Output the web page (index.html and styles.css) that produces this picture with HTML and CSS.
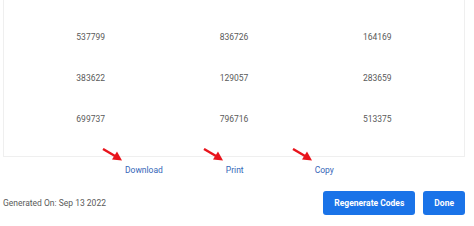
FILE: index.html
```html
<!DOCTYPE html>
<html>
<head>
	<title>Backup Codes</title>
	<link rel="stylesheet" href="styles.css">
</head>
<body>
	<div class="codes">
		<span>537799</span>
		<span>836726</span>
		<span>164169</span>
		<span>383622</span>
		<span>129057</span>
		<span>283659</span>
		<span>699737</span>
		<span>796716</span>
		<span>513375</span>
	</div>

	<div class="actions">
		<a class="link" href="#">
			<svg class="arrow" width="22" height="14" viewBox="0 0 22 14"><line x1="1" y1="1" x2="13" y2="8" stroke="#e8141c" stroke-width="2.4"/><polygon points="20,12.5 10,11.5 15,3.5" fill="#e8141c"/></svg>
			Download
		</a>
		<a class="link print" href="#">
			<svg class="arrow" width="22" height="14" viewBox="0 0 22 14"><line x1="1" y1="1" x2="13" y2="8" stroke="#e8141c" stroke-width="2.4"/><polygon points="20,12.5 10,11.5 15,3.5" fill="#e8141c"/></svg>
			Print
		</a>
		<a class="link copy" href="#">
			<svg class="arrow" width="22" height="14" viewBox="0 0 22 14"><line x1="1" y1="1" x2="13" y2="8" stroke="#e8141c" stroke-width="2.4"/><polygon points="20,12.5 10,11.5 15,3.5" fill="#e8141c"/></svg>
			Copy
		</a>
	</div>

	<div class="footer">
		<span class="generated">Generated On: Sep 13 2022</span>
		<button class="btn">Regenerate Codes</button>
		<button class="btn">Done</button>
	</div>
</body>
</html>
```

FILE: styles.css
```css
body {
	margin: 0;
	font-family: Roboto, "Liberation Sans", sans-serif;
	background: #fff;
}
.codes {
	margin: -1px 9px 0 3px;
	border: 1px solid #efefef;
	padding: 16px 15px 17px 15px;
	display: grid;
	grid-template-columns: repeat(3, 1fr);
	grid-auto-rows: 41px;
	align-items: center;
	justify-items: center;
	font-size: 8.5px;
	color: #5a5a5a;
}
.actions {
	display: flex;
	padding-left: 125px;
	margin-top: 6px;
	height: 14px;
	align-items: center;
}
.link {
	position: relative;
	font-size: 8.5px;
	color: #3566b8;
	text-decoration: none;
}
.print {
	margin-left: 63px;
}
.copy {
	margin-left: 71px;
}
.arrow {
	position: absolute;
	left: -23px;
	top: -17px;
}
.footer {
	display: flex;
	align-items: center;
	margin-top: 14px;
	padding: 0 9px 0 3px;
}
.generated {
	flex: 1;
	font-size: 8.5px;
	color: #5a5a5a;
}
.btn {
	height: 24px;
	padding: 0 11px;
	margin-left: 8px;
	border: none;
	border-radius: 3px;
	background: #1a73e8;
	color: #fff;
	font-family: Roboto, "Liberation Sans", sans-serif;
	font-weight: bold;
	font-size: 8.5px;
	cursor: pointer;
}
```
